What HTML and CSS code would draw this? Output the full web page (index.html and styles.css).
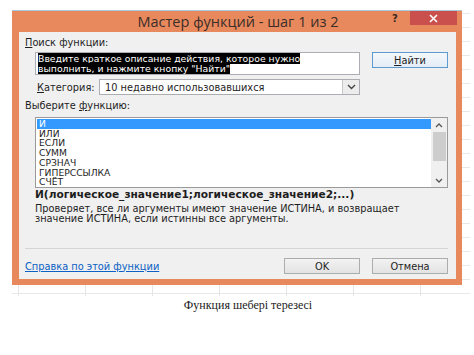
FILE: index.html
```html
<!DOCTYPE html>
<html lang="ru">
<head>
  <meta charset="UTF-8" />
  <meta name="viewport" content="width=device-width, initial-scale=1.0" />
  <title>Мастер функций</title>
  <link rel="stylesheet" href="styles.css">
</head>
<body>
  <div class="shot">
    <div class="dialog">
      <div class="titlebar">
        <span class="title">Мастер функций - шаг 1 из 2</span>
        <span class="help">?</span>
        <span class="close">
          <svg width="9" height="9" viewBox="0 0 9 9"><path d="M1 1 L8 8 M8 1 L1 8" stroke="#fff" stroke-width="1.6" fill="none"/></svg>
        </span>
      </div>

      <div class="panel">
        <div class="label"><u>П</u>оиск функции:</div>

        <div class="search-row">
          <div class="search"><span class="selected-text">Введите краткое описание действия, которое нужно<br>выполнить, и нажмите кнопку "Найти"</span></div>
          <button class="btn default"><u>Н</u>айти</button>
        </div>

        <div class="cat-row">
          <span class="cat-label"><u>К</u>атегория:</span>
          <div class="select">
            <span class="select-value">10 недавно использовавшихся</span>
            <span class="drop">
              <svg width="9" height="6" viewBox="0 0 9 6"><path d="M1 1 L4.5 4.5 L8 1" stroke="#444" stroke-width="1.4" fill="none"/></svg>
            </span>
          </div>
        </div>

        <div class="label list-label">Выберите <u>ф</u>ункцию:</div>

        <div class="list">
          <ul class="items">
            <li class="active">И</li>
            <li>ИЛИ</li>
            <li>ЕСЛИ</li>
            <li>СУММ</li>
            <li>СРЗНАЧ</li>
            <li>ГИПЕРССЫЛКА</li>
            <li>СЧЁТ</li>
          </ul>
          <div class="scrollbar">
            <span class="arrow">
              <svg width="8" height="5" viewBox="0 0 8 5"><path d="M1 4 L4 1 L7 4" stroke="#555" stroke-width="1.3" fill="none"/></svg>
            </span>
            <span class="thumb"></span>
            <span class="arrow arrow-down">
              <svg width="8" height="5" viewBox="0 0 8 5"><path d="M1 1 L4 4 L7 1" stroke="#555" stroke-width="1.3" fill="none"/></svg>
            </span>
          </div>
        </div>

        <div class="signature">И(логическое_значение1;логическое_значение2;...)</div>
        <div class="desc">Проверяет, все ли аргументы имеют значение ИСТИНА, и возвращает<br>значение ИСТИНА, если истинны все аргументы.</div>

        <div class="sep"></div>

        <div class="footer">
          <a class="help-link" href="#">Справка по этой функции</a>
          <button class="btn">OK</button>
          <button class="btn">Отмена</button>
        </div>
      </div>
    </div>
  </div>

  <p class="caption">Функция шебері терезесі</p>
</body>
</html>
```

FILE: styles.css
```css
:root {
  --frame-color: #e8885d;
  --panel-color: #f0f0f0;
  --text-color: #1e1e1e;
  --select-color: #3399ff;
  --font-family: 'DejaVu Sans', sans-serif;
}

body {
  margin: 0;
  background-color: #fff;
}

/* excel sheet behind the dialog */
.shot {
  margin: 11px 0 0 12px;
  width: 458px;
  height: 285px;
  background-color: #fff;
  background-image:
    linear-gradient(to right, #e6e6e6 1px, transparent 1px),
    linear-gradient(to bottom, #e8e8e8 1px, transparent 1px);
  background-size: 67px 100%, 100% 14px;
  background-position: 6px 0, 0 2px;
}

.dialog {
  width: 450px;
  height: 274px;
  margin-top: 1px;
  background-color: var(--frame-color);
  box-shadow: 0 -1px 0 #a9c8de;
  display: flex;
  flex-direction: column;
}

.titlebar {
  height: 21px;
  display: flex;
  align-items: flex-start;
}

.title {
  flex: 1;
  padding-left: 79px;
  text-align: center;
  font-family: 'Open Sans', sans-serif;
  font-size: 14.5px;
  line-height: 21px;
  color: #3b2e28;
}

.help {
  width: 20px;
  margin-right: 5px;
  text-align: center;
  font-family: var(--font-family);
  font-weight: bold;
  font-size: 10px;
  line-height: 15px;
  color: #3a2a22;
}

.close {
  width: 47px;
  height: 14px;
  margin-right: 5px;
  background-color: #c9504c;
  display: flex;
  align-items: center;
  justify-content: center;
}

.panel {
  flex: 1;
  margin: 0 6px 6px 7px;
  padding: 5px 8px 0 6px;
  background-color: var(--panel-color);
  font-family: var(--font-family);
  font-size: 9.8px;
  color: var(--text-color);
}

.label {
  line-height: 12px;
}

.list-label {
  margin-top: 5px;
}

.search-row {
  display: flex;
  gap: 12px;
  margin: 3px 0 0 10px;
}

.search {
  width: 325px;
  height: 23px;
  box-sizing: border-box;
  padding: 1px 2px;
  background-color: #fff;
  border: 1px solid #abadb3;
  font-size: 9.3px;
  line-height: 10px;
}

.selected-text {
  background-color: #000;
  color: #fff;
}

.btn {
  width: 76px;
  height: 16px;
  padding: 0;
  font-family: var(--font-family);
  font-size: 9.8px;
  color: var(--text-color);
  background: linear-gradient(#f2f2f2, #e3e3e3);
  border: 1px solid #acacac;
}

.btn.default {
  border-color: #5b9bd0;
  background: linear-gradient(#f4f8fc, #e4edf6);
}

.cat-row {
  display: flex;
  align-items: center;
  margin: 4px 0 0 12px;
}

.cat-label {
  width: 62px;
}

.select {
  width: 261px;
  height: 16px;
  box-sizing: border-box;
  display: flex;
  align-items: center;
  background-color: #fff;
  border: 1px solid #abadb3;
}

.select-value {
  flex: 1;
  padding-left: 5px;
}

.drop {
  width: 16px;
  height: 14px;
  display: flex;
  align-items: center;
  justify-content: center;
  background-color: #ececec;
  border-left: 1px solid #c8c8c8;
}

.list {
  width: 413px;
  height: 71px;
  box-sizing: border-box;
  margin: 5px 0 0 10px;
  display: flex;
  background-color: #fff;
  border: 1px solid #9a9a9a;
}

.items {
  flex: 1;
  margin: 0;
  padding: 1px 0 0 1px;
  list-style: none;
  font-size: 9.2px;
  line-height: 9.7px;
}

.items li {
  padding-left: 2px;
}

.items li.active {
  background-color: var(--select-color);
  color: #fff;
}

.scrollbar {
  width: 16px;
  display: flex;
  flex-direction: column;
  align-items: center;
  background-color: #f0f0f0;
}

.arrow {
  height: 14px;
  display: flex;
  align-items: center;
}

.arrow-down {
  margin-top: auto;
}

.thumb {
  width: 13px;
  height: 29px;
  background-color: #cdcdcd;
}

.signature {
  margin: 0 0 0 10px;
  font-size: 10.6px;
  font-weight: bold;
  line-height: 12px;
}

.desc {
  margin: 4px 0 0 10px;
  line-height: 10px;
}

.sep {
  height: 1px;
  margin-top: 24px;
  background-color: #d5d5d5;
}

.footer {
  display: flex;
  align-items: center;
  gap: 12px;
  margin-top: 9px;
}

.help-link {
  flex: 1;
  color: #0b61c4;
}

.caption {
  margin: 2px 0 0;
  padding-left: 22px;
  text-align: center;
  font-family: 'Liberation Serif', serif;
  font-size: 12px;
  color: #222;
}
```
